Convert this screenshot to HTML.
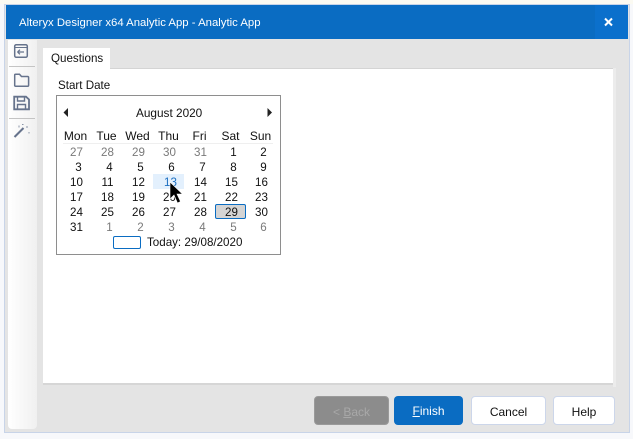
<!DOCTYPE html>
<html>
<head>
<meta charset="utf-8">
<style>
html,body{margin:0;padding:0;width:633px;height:439px;overflow:hidden;background:#f7f8fb}
body{position:relative;font-family:"Liberation Sans",sans-serif;font-size:11.6px;color:#111}
.a{position:absolute}
.t{position:absolute;white-space:nowrap;line-height:15px}
.d{position:absolute;width:31px;text-align:center;line-height:15px;white-space:nowrap}
.g{color:#7a7a7a}
.btn{position:absolute;top:396px;height:29px;line-height:30px;text-align:center;border-radius:4px;box-sizing:border-box;font-size:12px}
</style>
</head>
<body>
<div class="a" style="left:0;top:0;width:633px;height:4px;background:#fbfaf2"></div>
<div class="a" style="left:4px;top:4px;width:626px;height:429px;background:#e4e4e4;border:1px solid #c8d4e8;box-sizing:border-box"></div>
<div class="a" style="left:6px;top:5px;width:622px;height:34px;background:#0a6cc2"></div>
<div class="a" style="left:595px;top:5px;width:33px;height:34px;background:#0b70cc"></div>
<div class="t" style="left:19px;top:16px;color:#fff;font-size:11.35px">Alteryx Designer x64 Analytic App - Analytic App</div>
<svg class="a" style="left:603px;top:17px" width="11" height="10" viewBox="0 0 11 10"><path d="M2 1.5 L9 8.5 M9 1.5 L2 8.5" stroke="#fff" stroke-width="2" fill="none"/></svg>

<div class="a" style="left:8px;top:40px;width:29px;height:389px;border-radius:0 0 4px 4px;background:linear-gradient(to right,#fff,#f0f0f0)"></div>
<svg class="a" style="left:8px;top:40px" width="29" height="110" viewBox="0 0 29 110" fill="none" stroke="#66738c" stroke-width="1.5">
<rect x="6.7" y="4.7" width="12.6" height="12.6" rx="1.5"/>
<path d="M6.5 7.5H19.5" stroke-width="1"/>
<path d="M9.5 12H16M9.5 12L12 9.7M9.5 12L12 14.3" stroke-width="1.2"/>
<path d="M1 26.5H27" stroke="#c4c4c4" stroke-width="1"/>
<path d="M6.7 46V35.2Q6.7 34.3 7.6 34.3H11.5L13.5 36.5H19.6Q20.6 36.5 20.6 37.5V45.2Q20.6 46.2 19.6 46.2H7.6Q6.7 46.2 6.7 45.4Z"/>
<path d="M6.2 56.7H18L21 59.5V69.3H6.2Z" stroke-width="1.8"/>
<path d="M9.5 56.7V61H16.5V56.7M9.5 69V64.5H17.5V69" stroke-width="1.4"/>
<path d="M1 78.5H27" stroke="#c4c4c4" stroke-width="1"/>
<path d="M6.5 97L15.5 88" stroke-width="2"/>
<path d="M11 85.5V87.5M19 86V88M21 92V93.5M14 84.5H15.5" stroke-width="1" stroke="#8a95a8"/>
</svg>

<div class="a" style="left:43px;top:68px;width:570px;height:317px;background:#fff;border:1px solid #d6d6d6;border-width:0 0 2px 0;box-sizing:border-box"></div>
<div class="a" style="left:43px;top:48px;width:67px;height:21px;background:#fff"></div>
<div class="t" style="left:51px;top:51px">Questions</div>
<div class="a" style="left:110px;top:68px;width:503px;height:1px;background:#d4d4d4"></div>
<div class="a" style="left:613px;top:68px;width:3px;height:319px;background:#ececec"></div>
<div class="t" style="left:58px;top:78px">Start Date</div>

<div class="a" style="left:56px;top:95px;width:225px;height:160px;border:1px solid #8e8e8e;box-sizing:border-box;background:#fff"></div>
<svg class="a" style="left:63px;top:108px" width="6" height="9"><path d="M5 0V9L0.5 4.5Z" fill="#222"/></svg>
<svg class="a" style="left:267px;top:108px" width="6" height="9"><path d="M0.5 0V9L5 4.5Z" fill="#222"/></svg>
<div class="t" style="left:136px;top:106px;font-size:11.8px">August 2020</div>
<div class="a" style="left:63px;top:143px;width:210px;height:1px;background:#efefef"></div>

<div class="d" style="left:60px;top:129px;font-size:12px">Mon</div><div class="d" style="left:91px;top:129px;font-size:12px">Tue</div><div class="d" style="left:122px;top:129px;font-size:12px">Wed</div><div class="d" style="left:153px;top:129px;font-size:12px">Thu</div><div class="d" style="left:184px;top:129px;font-size:12px">Fri</div><div class="d" style="left:215px;top:129px;font-size:12px">Sat</div><div class="d" style="left:245px;top:129px;font-size:12px">Sun</div>

<div class="a" style="left:153px;top:174px;width:31px;height:15px;background:#e3f0fd"></div>
<div class="a" style="left:215px;top:204px;width:31px;height:15px;background:#d4d4d4;border:1px solid #0a6cc2;border-radius:2px;box-sizing:border-box"></div>
<div class="a" style="left:113px;top:236px;width:28px;height:13px;border:1px solid #0a6cc2;border-radius:2px;box-sizing:border-box"></div>

<div class="d g" style="left:61px;top:145px">27</div><div class="d g" style="left:92px;top:145px">28</div><div class="d g" style="left:123px;top:145px">29</div><div class="d g" style="left:154px;top:145px">30</div><div class="d g" style="left:185px;top:145px">31</div><div class="d" style="left:218px;top:145px">1</div><div class="d" style="left:248px;top:145px">2</div>
<div class="d" style="left:63px;top:160px">3</div><div class="d" style="left:94px;top:160px">4</div><div class="d" style="left:125px;top:160px">5</div><div class="d" style="left:156px;top:160px">6</div><div class="d" style="left:187px;top:160px">7</div><div class="d" style="left:218px;top:160px">8</div><div class="d" style="left:248px;top:160px">9</div>
<div class="d" style="left:61px;top:175px">10</div><div class="d" style="left:92px;top:175px">11</div><div class="d" style="left:123px;top:175px">12</div><div class="d" style="left:155px;top:175px;color:#1d6fc0">13</div><div class="d" style="left:185px;top:175px">14</div><div class="d" style="left:216px;top:175px">15</div><div class="d" style="left:246px;top:175px">16</div>
<div class="d" style="left:61px;top:190px">17</div><div class="d" style="left:92px;top:190px">18</div><div class="d" style="left:123px;top:190px">19</div><div class="d" style="left:154px;top:190px">20</div><div class="d" style="left:185px;top:190px">21</div><div class="d" style="left:216px;top:190px">22</div><div class="d" style="left:246px;top:190px">23</div>
<div class="d" style="left:61px;top:205px">24</div><div class="d" style="left:92px;top:205px">25</div><div class="d" style="left:123px;top:205px">26</div><div class="d" style="left:154px;top:205px">27</div><div class="d" style="left:185px;top:205px">28</div><div class="d" style="left:216px;top:205px">29</div><div class="d" style="left:246px;top:205px">30</div>
<div class="d" style="left:61px;top:220px">31</div><div class="d g" style="left:94px;top:220px">1</div><div class="d g" style="left:125px;top:220px">2</div><div class="d g" style="left:156px;top:220px">3</div><div class="d g" style="left:187px;top:220px">4</div><div class="d g" style="left:218px;top:220px">5</div><div class="d g" style="left:248px;top:220px">6</div>
<div class="t" style="left:147px;top:235px">Today: 29/08/2020</div>

<svg class="a" style="left:168px;top:181px" width="15" height="24"><path d="M2 1V18L6 14L9.5 22L12.5 20.5L9 13H14.5Z" fill="#000" stroke="#fff" stroke-width="0.6"/></svg>

<div class="btn" style="left:314px;width:75px;background:#8c8c8c;color:#a8a8a8;border:1px solid #9a9a9a">&lt; <u>B</u>ack</div>
<div class="btn" style="left:394px;width:69px;background:#0a6cc2;color:#fff"><u>F</u>inish</div>
<div class="btn" style="left:471px;width:75px;background:#fff;border:1px solid #ccd6ea">Cancel</div>
<div class="btn" style="left:553px;width:62px;background:#fff;border:1px solid #ccd6ea">Help</div>
</body>
</html>
